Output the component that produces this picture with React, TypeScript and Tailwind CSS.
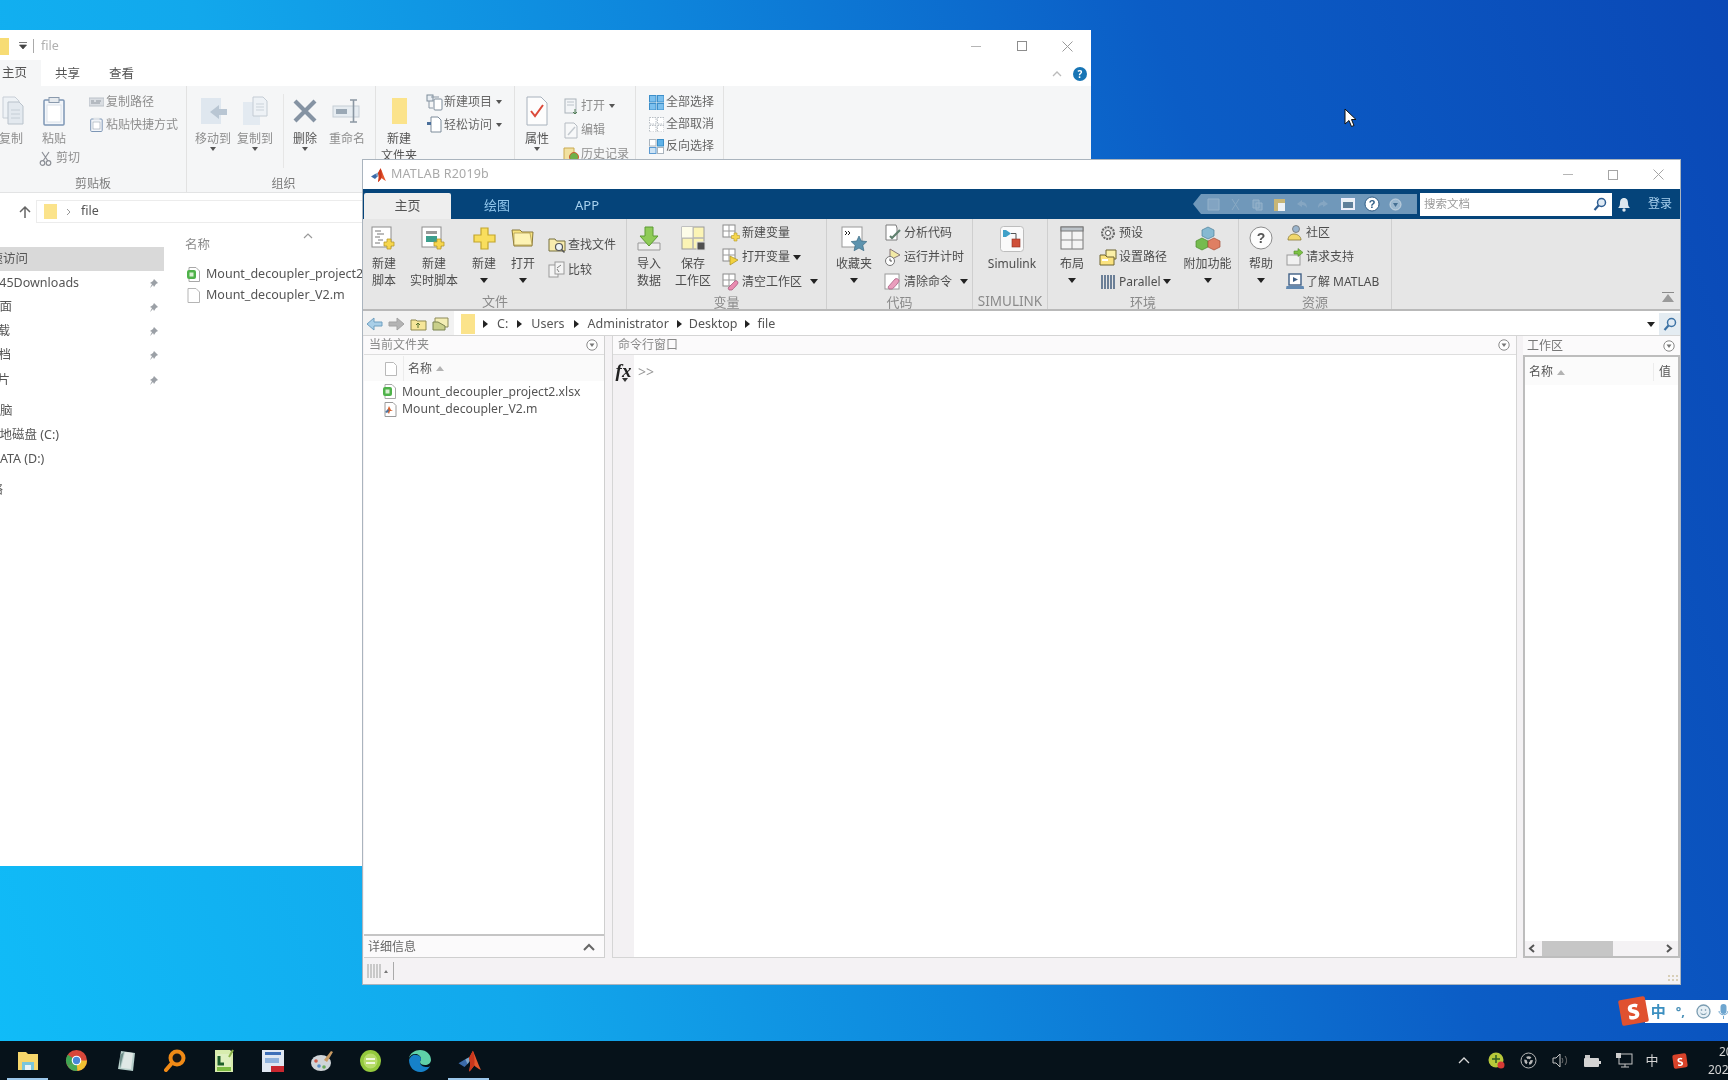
import React from "react";

type P = { children?: React.ReactNode; className?: string };
const S = ({ w = 16, h = 16, vb, children, className }: { w?: number; h?: number; vb?: string } & P) => (
  <svg width={w} height={h} viewBox={vb || `0 0 ${w} ${h}`} className={`shrink-0 ${className || ""}`}>{children}</svg>
);

/* ---------- shared little shapes ---------- */
const Tri = ({ c = "#222" }: { c?: string }) => (
  <S w={8} h={5}><path d="M0 0h8L4 5z" fill={c} /></S>
);
const Arrow = () => (
  <div className="flex h-[17px] items-center justify-center"><Tri /></div>
);
const DropCircle = () => (
  <S w={12} h={12}>
    <circle cx="6" cy="6" r="5.2" fill="#fff" stroke="#8a8a8a" />
    <path d="M3.5 4.5h5L6 8z" fill="#777" />
  </S>
);
const FolderY = ({ w = 14, h = 18 }: { w?: number; h?: number }) => (
  <div className={"shrink-0 bg-[#fbe38b]"} style={{ width: w, height: h }} />
);
const Matlab = ({ s = 16 }: { s?: number }) => (
  <S w={s} h={s} vb="0 0 16 16">
    <path d="M1 9.5 5.5 6.8 8 9l-3 3z" fill="#3b6aa8" />
    <path d="M5.5 6.8 8 5.5 8.5 8 7 10z" fill="#7fa6c9" />
    <path d="M8 6l2.6-4.8C12 4 14 10 16 14c-2-1-3.4-2-4.5-3-1.400 2-2.500 3.500-3.500 4 1-4 1-6 0-9z" fill="#e4572e" />
    <path d="M10.600 1.200c1 3 1.400 6 .9 9.800-1.400 2-2.500 3.500-3.500 4 1-4 1-6 0-9z" fill="#c9361c" />
  </S>
);

/* ---------- MATLAB toolstrip icons ---------- */
const Page = ({ c = "#fff" }: { c?: string }) => (
  <rect x="1" y="1" width="19" height="20" fill={c} stroke="#8d8d8d" />
);
const Plus = ({ x = 13, y = 13 }: { x?: number; y?: number }) => (
  <path
    d={`M${x + 3} ${y}h4v3h3v4h-3v3h-4v-3h-3v-4h3z`}
    fill="#f6d64e"
    stroke="#b99a2a"
    strokeWidth=".8"
  />
);
const IcNewScript = () => (
  <S w={26} h={25}>
    <Page />
    <path d="M4 5h6M6 8h7M4 11h5M7 14h5M4 17h5" stroke="#777" strokeWidth="1" />
    <Plus />
  </S>
);
const IcLive = () => (
  <S w={26} h={25}>
    <Page />
    <rect x="5" y="5" width="11" height="3" fill="#9a9a9a" />
    <rect x="5" y="10" width="11" height="6" fill="#3d9f8e" />
    <Plus />
  </S>
);
const IcPlusBig = () => (
  <S w={25} h={25}>
    <path d="M9 2h7v7h7v7h-7v7H9v-7H2V9h7z" fill="#f9de5d" stroke="#c2a52d" strokeWidth="1.200" />
  </S>
);
const IcOpenFolder = () => (
  <S w={24} h={22}>
    <path d="M1 4h8l2 2h11l-1 14H3z" fill="#f7e37e" stroke="#8b7a3a" />
    <path d="M3 7h16l2 12H3z" fill="#fdf3b4" stroke="#a8944a" strokeWidth=".7" />
  </S>
);
const IcFind = () => (
  <S w={19} h={18}>
    <path d="M1 3h6l1.500 2H17v10H1z" fill="#f8ecae" stroke="#77703f" />
    <circle cx="11" cy="11" r="3.500" fill="#eef4f7" stroke="#555" strokeWidth="1.200" />
    <path d="M13.500 13.500l3 3" stroke="#555" strokeWidth="1.500" />
  </S>
);
const IcCompare = () => (
  <S w={18} h={18}>
    <rect x="1" y="4" width="9" height="12" fill="#f4f4f4" stroke="#9a9a9a" />
    <rect x="7" y="1" width="9" height="12" fill="#f4f4f4" stroke="#9a9a9a" />
    <path d="M9 7l4-3M9 8l2 3" stroke="#7d7d7d" />
  </S>
);
const IcImport = () => (
  <S w={24} h={27}>
    <path d="M1 17h22v7H1z" fill="#eee" stroke="#999" />
    <path d="M8 1h8v9h5l-9 10-9-10h5z" fill="#8fcb58" stroke="#5c9a34" />
  </S>
);
const IcSaveWs = () => (
  <S w={25} h={25}>
    <rect x="1" y="1" width="22" height="22" fill="#fbf4b5" stroke="#9a9a9a" />
    <path d="M12 1v22M1 12h22" stroke="#aaa" />
    <rect x="1" y="1" width="11" height="11" fill="#fdfce8" />
    <rect x="16" y="16" width="8" height="8" fill="#4f4f4f" stroke="#ddd" />
    <path d="M12 1v22M1 12h22" stroke="#b8b8b8" />
  </S>
);
const Grid = ({ c = "#fff" }: { c?: string }) => (
  <>
    <rect x="1" y="1" width="12" height="12" fill={c} stroke="#8a8a8a" />
    <path d="M7 1v12M1 7h12" stroke="#9a9a9a" />
  </>
);
const IcNewVar = () => (
  <S w={18} h={18}><Grid /><path d="M12 9h3v2.500h2.500v3H15V17h-3v-2.500H9.500v-3H12z" fill="#f6d64e" stroke="#b59a2a" strokeWidth=".6" /></S>
);
const IcOpenVar = () => (
  <S w={18} h={18}><Grid /><path d="M8 8l8 4-8 5z" fill="#f3d23f" stroke="#a88f20" strokeWidth=".7" /></S>
);
const IcClearVar = () => (
  <S w={18} h={18}><Grid /><path d="M6 15l7-7c1-1 3 0 3 2 0 1-5 6-6 7H7z" fill="#e98bb0" stroke="#a05377" strokeWidth=".7" /></S>
);
const IcFav = () => (
  <S w={26} h={27}>
    <rect x="1" y="1" width="20" height="20" fill="#fff" stroke="#999" />
    <path d="M4 5l2 2-2 2M7 5l2 2-2 2" fill="none" stroke="#222" />
    <path d="M18 10l2.300 5 5.500.6-4 3.700 1.100 5.400-4.900-2.700-4.900 2.700 1.100-5.400-4-3.700 5.500-.6z" fill="#5d93ae" stroke="#3b6a82" strokeWidth=".7" />
  </S>
);
const IcAnalyze = () => (
  <S w={18} h={18}>
    <path d="M2 1h10l1 3v12H2z" fill="#fff" stroke="#7d7d7d" />
    <path d="M6 12l2 2 8-8" fill="none" stroke="#5f7f6d" strokeWidth="2.200" />
  </S>
);
const IcRunTime = () => (
  <S w={18} h={19}>
    <path d="M6 1l10 6-10 5z" fill="#f2e9a5" stroke="#877" />
    <circle cx="6" cy="13" r="4.500" fill="#fff" stroke="#777" />
    <path d="M6 10.500V13h2" fill="none" stroke="#555" />
  </S>
);
const IcClearCmd = () => (
  <S w={18} h={18}>
    <rect x="1" y="1" width="14" height="15" fill="#fff" stroke="#9a9a9a" />
    <path d="M4 14l7-8c1.500-1 4 0 4 2 0 1-6 8-7 8H5z" fill="#ea9ebd" stroke="#a75d80" strokeWidth=".8" />
  </S>
);
const IcSimulink = () => (
  <S w={24} h={26}>
    <rect x=".5" y=".5" width="23" height="25" rx="3" fill="#fafafa" stroke="#bdbdbd" />
    <path d="M3 4h3l5 3.500L6 11H3z" fill="#3fa0c8" />
    <path d="M11 7.500h5V13" fill="none" stroke="#555" />
    <rect x="12" y="13" width="8" height="8" fill="#cf4f38" stroke="#8d2e1e" strokeWidth=".6" />
  </S>
);
const IcLayout = () => (
  <S w={24} h={24}>
    <rect x="1" y="1" width="22" height="22" fill="#f4f4f4" stroke="#777" />
    <rect x="1" y="1" width="22" height="4" fill="#bcc3c9" stroke="#777" />
    <path d="M12 5v18M1 14h22" stroke="#8a8a8a" />
  </S>
);
const IcGear = () => (
  <S w={16} h={16}>
    <circle cx="8" cy="8" r="6" fill="#ddd" stroke="#666" strokeWidth="2" strokeDasharray="2 1" />
    <circle cx="8" cy="8" r="2.500" fill="#fff" stroke="#555" />
  </S>
);
const IcSetPath = () => (
  <S w={18} h={17}>
    <path d="M7 1h10v9H7z" fill="#fbf0a6" stroke="#6f6430" />
    <path d="M1 6h5l2 2h7v8H1z" fill="#fbe37f" stroke="#6f6430" />
    <rect x="3" y="10" width="6" height="2" fill="#fff" />
  </S>
);
const IcParallel = () => (
  <S w={16} h={16}>
    {[1, 4, 7, 10, 13].map((x) => <rect key={x} x={x} y="1" width="2" height="14" fill="#6b7f97" />)}
  </S>
);
const IcAddOn = () => (
  <S w={26} h={26}>
    <path d="M13 1l6 3v6l-6 3-6-3V4z" fill="#86b9d2" stroke="#4c7f99" strokeWidth=".7" />
    <path d="M7 12l6 3v6l-6 3-6-3v-6z" fill="#75bb4e" stroke="#4b8a2e" strokeWidth=".7" />
    <path d="M19 12l6 3v6l-6 3-6-3v-6z" fill="#df7f63" stroke="#a54f37" strokeWidth=".7" />
  </S>
);
const IcHelp = () => (
  <S w={24} h={24}>
    <circle cx="12" cy="12" r="11" fill="#fdfdfd" stroke="#8c8c8c" />
    <text x="12" y="17" textAnchor="middle" fontSize="14" fontWeight="700" fill="#555" fontFamily="Liberation Sans">?</text>
  </S>
);
const IcCommunity = () => (
  <S w={18} h={18}>
    <circle cx="10" cy="5" r="3.500" fill="#9ab4cc" stroke="#666" strokeWidth=".7" />
    <path d="M2 16c0-4 3-6 6-6s7 2 7 6z" fill="#f1d86d" stroke="#8a7a35" strokeWidth=".8" />
  </S>
);
const IcSupport = () => (
  <S w={18} h={18}>
    <rect x="1" y="7" width="13" height="10" fill="#f1f1f1" stroke="#999" />
    <path d="M8 3h4V0.500l5 4-5 4V6H8z" fill="#7cc244" stroke="#4f8a2a" strokeWidth=".6" />
  </S>
);
const IcLearn = () => (
  <S w={18} h={17}>
    <rect x="3" y="1" width="12" height="11" fill="#fff" stroke="#3f5f85" strokeWidth="1.400" />
    <path d="M7 4l5 2.500L7 9z" fill="#3f5f85" />
    <path d="M0.500 13h17l1 3H0z" fill="#6289b1" />
  </S>
);
const Mag = ({ c = "#2d5d92" }: { c?: string }) => (
  <S w={14} h={14}>
    <circle cx="8.500" cy="5.500" r="4" fill="#dfeaf4" stroke={c} strokeWidth="1.500" />
    <path d="M5.500 8.500L1.500 13" stroke={c} strokeWidth="2.200" />
  </S>
);
const Bell = () => (
  <S w={12} h={15}>
    <path d="M6 1c3 0 4 2.500 4 5 0 3 1 4 2 5H0c1-1 2-2 2-5 0-2.500 1-5 4-5z" fill="#dce6ee" />
    <circle cx="6" cy="13" r="1.700" fill="#dce6ee" />
  </S>
);

/* ---------- MATLAB components ---------- */
const Big = ({
  className, icon, lines, arrow,
}: { className: string; icon: React.ReactNode; lines: string[]; arrow?: boolean }) => (
  <div className={`flex shrink-0 flex-col items-center pt-[7px] ${className}`}>
    <div className="flex h-[29px] items-start justify-center">{icon}</div>
    {lines.map((l) => (
      <div key={l} className="whitespace-nowrap leading-[17px]">{l}</div>
    ))}
    {arrow && <Arrow />}
  </div>
);
const Small = ({ icon, text, tri, triGap }: { icon: React.ReactNode; text: string; tri?: boolean; triGap?: string }) => (
  <div className="flex h-[24.500px] items-center whitespace-nowrap">
    <div className="flex w-[20px] shrink-0 items-center justify-center">{icon}</div>
    <span className="ml-[1px]">{text}</span>
    {tri && <span className={`flex items-center ${triGap || "ml-[3px]"}`}><Tri /></span>}
  </div>
);
const Col = ({ className, children }: P) => (
  <div className={`flex shrink-0 flex-col pt-[2px] ${className || ""}`}>{children}</div>
);
const Group = ({ className, label, children }: { label: string } & P) => (
  <div className={`flex h-full shrink-0 flex-col border-r border-[#cfcfcf] ${className}`}>
    <div className="flex h-[75px]">{children}</div>
    <div className="text-center text-[13px] leading-[16px] text-[#8a8a8a]">{label}</div>
  </div>
);

const CrumbTri = () => (
  <S w={5} h={8}><path d="M0 0l5 4-5 4z" fill="#222" /></S>
);

const Xlsx = () => (
  <S w={13} h={15}>
    <path d="M2 .5h7l3.500 3.500v10.500H2z" fill="#fff" stroke="#a8a8a8" />
    <rect x="0" y="3" width="9" height="9" rx="2" fill="#4fb24a" />
    <rect x="2.500" y="5.500" width="4" height="4" fill="#d9f0d2" />
  </S>
);
const MFile = () => (
  <S w={14} h={15}>
    <path d="M2 .5h8l3 3v11H2z" fill="#fff" stroke="#9a9a9a" />
    <path d="M4 9l2-5 2 4 2 1-3 0-1 3z" fill="#d9632f" />
    <path d="M2 10l3-3 1 2-2 2z" fill="#49739f" />
  </S>
);

const MatlabWin = () => (
  <div className="absolute left-[362px] top-[159px] flex h-[826px] w-[1319px] flex-col border border-[#aab4be] bg-[#f4f2f4] text-[12px] text-[#4d4d4d]">
    {/* title */}
    <div className="flex h-[29px] shrink-0 items-center bg-white pl-[7px]">
      <Matlab />
      <span className="ml-[5px] text-[12.500px] tracking-[0.2px] text-[#a9a9a9]">MATLAB R2019b</span>
      <div className="ml-auto flex items-center">
        <div className="mr-[35px] h-px w-[10px] bg-[#b5b5b5]" />
        <div className="mr-[35px] h-[10px] w-[10px] border border-[#a5a5a5]" />
        <S w={11} h={11} className="mr-[16px]"><path d="M.5.5l10 10M10.500.5l-10 10" stroke="#a5a5a5" /></S>
      </div>
    </div>
    {/* blue tab strip */}
    <div className="flex h-[30px] shrink-0 items-end bg-[#05447a] pl-[1px]">
      <div className="flex h-[26px] w-[87px] items-center justify-center rounded-t-[2px] bg-[#eeeeee] text-[13px] text-[#555]">主页</div>
      <div className="flex h-[26px] w-[92px] items-center justify-center text-[13px] text-[#8fc4ea]">绘图</div>
      <div className="flex h-[26px] w-[88px] items-center justify-center text-[13px] text-[#a9d2ef]">APP</div>
      <div className="ml-auto flex h-full items-center">
        <div className="flex h-[20px] w-[224px] items-center gap-[9px] bg-[#7098ba] pl-[14px] [clip-path:polygon(8px_0,100%_0,100%_100%,8px_100%,0_50%)]">
          <S w={13} h={13}><path d="M1 1h11v11H1z" fill="#82a4c2" stroke="#94b2ca" /></S>
          <S w={13} h={13}><path d="M3 12l7-11M10 12L3 1" stroke="#8aaac4" /></S>
          <S w={13} h={13}><path d="M2 2h6v8H2zM5 5h6v7H5z" fill="#7ea2c0" stroke="#96b3cb" /></S>
          <S w={13} h={15}><rect x="1" y="2" width="11" height="12" fill="#c7b676" /><rect x="5" y="6" width="7" height="8" fill="#eef2f5" /></S>
          <S w={13} h={13}><path d="M2 6l5-4v2c3 0 5 2 5 6-1-2-3-3-5-3v2z" fill="#85a6c2" /></S>
          <S w={13} h={13}><path d="M11 6L6 2v2C3 4 1 6 1 10c1-2 3-3 5-3v2z" fill="#85a6c2" /></S>
          <S w={14} h={12} className="ml-[2px]"><rect x=".5" y=".5" width="13" height="11" fill="#eaf0f4" stroke="#eef" /><rect x="2" y="4" width="10" height="6" fill="#5f7f9a" /></S>
          <S w={16} h={16}><circle cx="8" cy="8" r="7" fill="#fff" stroke="#2f5d85" /><text x="8" y="12" textAnchor="middle" fontSize="11" fontWeight="700" fill="#2f5d85" fontFamily="Liberation Sans">?</text></S>
          <S w={13} h={13}><circle cx="6.500" cy="6.500" r="5.500" fill="#9bb8cf" stroke="#c5d4e0" /><path d="M4 5h5L6.500 9z" fill="#456f92" /></S>
        </div>
        <div className="ml-[3px] flex h-[23px] w-[192px] items-center bg-white pl-[4px] pr-[5px] text-[11.500px] text-[#9a9a9a]">
          搜索文档
          <span className="ml-auto"><Mag /></span>
        </div>
        <div className="ml-[5px] flex w-[14px] justify-center"><Bell /></div>
        <div className="ml-[17px] mr-[8px] text-[12px] text-[#a8d0ee]">登录</div>
      </div>
    </div>
    {/* toolstrip */}
    <div className="flex h-[92px] shrink-0 border-b-2 border-[#b9b9b9] bg-[#e6e6e6]">
      <Group label="文件" className="w-[264px] pl-px">
        <Big className="w-[40px]" icon={<IcNewScript />} lines={["新建", "脚本"]} />
        <Big className="w-[60px]" icon={<IcLive />} lines={["新建", "实时脚本"]} />
        <Big className="w-[40px]" icon={<IcPlusBig />} lines={["新建"]} arrow />
        <Big className="w-[38px]" icon={<IcOpenFolder />} lines={["打开"]} arrow />
        <Col className="ml-[5px] pt-[14px]">
          <Small icon={<IcFind />} text="查找文件" />
          <Small icon={<IcCompare />} text="比较" />
        </Col>
      </Group>
      <Group label="变量" className="w-[200px]">
        <Big className="w-[44px]" icon={<IcImport />} lines={["导入", "数据"]} />
        <Big className="w-[44px]" icon={<IcSaveWs />} lines={["保存", "工作区"]} />
        <Col className="ml-[6px]">
          <Small icon={<IcNewVar />} text="新建变量" />
          <Small icon={<IcOpenVar />} text="打开变量" tri />
          <Small icon={<IcClearVar />} text="清空工作区" tri triGap="ml-[8px]" />
        </Col>
      </Group>
      <Group label="代码" className="w-[146px]">
        <Big className="w-[54px]" icon={<IcFav />} lines={["收藏夹"]} arrow />
        <Col className="ml-[2px]">
          <Small icon={<IcAnalyze />} text="分析代码" />
          <Small icon={<IcRunTime />} text="运行并计时" />
          <Small icon={<IcClearCmd />} text="清除命令" tri triGap="ml-[8px]" />
        </Col>
      </Group>
      <Group label="SIMULINK" className="w-[75px] [&>div:last-child]:text-[13.500px]">
        <Big className="ml-[3px] w-[72px] text-[12px]" icon={<IcSimulink />} lines={["Simulink"]} />
      </Group>
      <Group label="环境" className="w-[191px]">
        <Big className="w-[48px]" icon={<IcLayout />} lines={["布局"]} arrow />
        <Col className="ml-[2px]">
          <Small icon={<IcGear />} text="预设" />
          <Small icon={<IcSetPath />} text="设置路径" />
          <Small icon={<IcParallel />} text="Parallel" tri triGap="ml-[2px]" />
        </Col>
        <Big className="ml-[9px] w-[56px]" icon={<IcAddOn />} lines={["附加功能"]} arrow />
      </Group>
      <Group label="资源" className="w-[153px]">
        <Big className="ml-[1px] w-[42px]" icon={<IcHelp />} lines={["帮助"]} arrow />
        <Col className="ml-[3px]">
          <Small icon={<IcCommunity />} text="社区" />
          <Small icon={<IcSupport />} text="请求支持" />
          <Small icon={<IcLearn />} text="了解 MATLAB" />
        </Col>
      </Group>
      <div className="flex flex-1 items-end justify-end pb-[6px] pr-[6px]">
        <S w={12} h={11}><path d="M0 .5h12" stroke="#8a8a8a" /><path d="M6 2l6 8H0z" fill="#9a9a9a" /></S>
      </div>
    </div>
    {/* address */}
    <div className="flex h-[25px] shrink-0 items-center border-b border-[#d5d5d5] bg-white text-[12.500px] text-[#555]">
      <div className="flex h-full w-[91px] shrink-0 items-center gap-[5px] bg-[#f2f2f2] pl-[3px] pt-[2px]">
        <S w={17} h={14}><path d="M8 1v4h8v4H8v4L1 7z" fill="#a9cfe8" stroke="#6f9fc0" /></S>
        <S w={17} h={14}><path d="M9 1v4H1v4h8v4l7-6z" fill="#b4b4b4" stroke="#a2a2a2" /></S>
        <S w={17} h={14}><path d="M1 3h5l1 1h9v9H1z" fill="#f6e69a" stroke="#8f8950" /><path d="M8 11V6m-2 2l2-2 2 2" fill="none" stroke="#55702f" /></S>
        <S w={17} h={14}><path d="M3 1h13v9H3z" fill="#f4eeb5" stroke="#8c8a5a" /><path d="M1 5h5l7 4v4H1z" fill="#c9cf8a" stroke="#7b8350" /></S>
      </div>
      <div className="flex flex-1 items-center pt-[2px]">
        <div className="ml-[7px]"><FolderY w={14} h={20} /></div>
        <div className="ml-[8px] flex items-center"><CrumbTri /></div>
        <span className="ml-[9px]">C:</span>
        <div className="ml-[9px]"><CrumbTri /></div>
        <span className="ml-[9px]">Users</span>
        <div className="ml-[9px]"><CrumbTri /></div>
        <span className="ml-[9px]">Administrator</span>
        <div className="ml-[8px]"><CrumbTri /></div>
        <span className="ml-[7px]">Desktop</span>
        <div className="ml-[8px]"><CrumbTri /></div>
        <span className="ml-[7px]">file</span>
        <div className="ml-auto flex items-center">
          <Tri />
          <div className="ml-[4px] flex h-[22px] w-[21px] items-center justify-center bg-[#e4ecf2]"><Mag c="#3d73a5" /></div>
        </div>
      </div>
    </div>
    {/* panels */}
    <div className="flex min-h-0 flex-1 pl-px pt-0">
      <div className="flex w-[241px] shrink-0 flex-col border-b border-r border-[#cfcfcf] bg-white">
        <div className="flex h-[19px] shrink-0 items-center justify-between border-b border-[#dedede] bg-[#fbfafb] pl-[5px] pr-[6px] text-[#8a8a8a]">
          <span>当前文件夹</span><DropCircle />
        </div>
        <div className="flex h-[26px] shrink-0 items-center bg-[#fafafa] pl-[21px] pt-[1px]">
          <S w={12} h={14}><path d="M.5.500h8l3 3v10H.5z" fill="#fff" stroke="#b9b9b9" /></S>
          <div className="ml-[6px] flex h-full items-center border-l border-[#ececec] pl-[4px]">
            <span className="text-[#555]">名称</span>
            <S w={8} h={5} className="ml-[4px]"><path d="M4 0l4 5H0z" fill="#b3b3b3" /></S>
          </div>
        </div>
        <div className="flex-1 pl-[19px] pt-[2px] text-[12.200px] text-[#555]">
          <div className="flex h-[17.500px] items-center gap-[6px] whitespace-nowrap"><Xlsx />Mount_decoupler_project2.xlsx</div>
          <div className="flex h-[17.500px] items-center gap-[5px] whitespace-nowrap"><MFile />Mount_decoupler_V2.m</div>
        </div>
        <div className="flex h-[23px] shrink-0 items-center justify-between border-t-2 border-[#c5c5c5] bg-[#fbfafb] pl-[4px] pr-[9px] text-[#666]">
          <span>详细信息</span>
          <S w={12} h={8}><path d="M1 7l5-5 5 5" fill="none" stroke="#666" strokeWidth="2" /></S>
        </div>
      </div>
      <div className="ml-[7px] flex w-[905px] shrink-0 flex-col border-b border-r border-l border-[#d5d5d5] bg-white">
        <div className="flex h-[19px] shrink-0 items-center justify-between border-b border-[#dedede] bg-[#fbfafb] pl-[5px] pr-[6px] text-[#8a8a8a]">
          <span>命令行窗口</span><DropCircle />
        </div>
        <div className="flex flex-1">
          <div className="flex h-full w-[21px] justify-center bg-[#f3f1f3] pt-[6px]">
            <div className="flex flex-col items-center">
              <span className="text-[19px] font-bold italic leading-[20px] text-[#222] [font-family:'Liberation_Serif',serif]">fx</span>
              <div className="-mt-[3px] ml-[4px]"><S w={6} h={4}><path d="M0 0h6L3 4z" fill="#333" /></S></div>
            </div>
          </div>
          <div className="pl-[4px] pt-[6px] text-[14px] text-[#9a9a9a]">&gt;&gt;</div>
        </div>
      </div>
      <div className="ml-[6px] flex w-[157px] shrink-0 flex-col">
        <div className="flex h-[19px] shrink-0 items-center justify-between bg-[#fbfafb] pl-[4px] pr-[5px] text-[#777]">
          <span>工作区</span><DropCircle />
        </div>
        <div className="flex flex-1 flex-col border-2 border-[#bdbdbd] bg-white">
          <div className="flex h-[28px] shrink-0 items-center bg-[#fbfbfb] pl-[4px] pr-[7px] pt-[2px] text-[#555]">
            <span>名称</span>
            <S w={8} h={5} className="ml-[4px]"><path d="M4 0l4 5H0z" fill="#b3b3b3" /></S>
            <span className="ml-auto border-l border-[#ececec] pl-[5px]">值</span>
          </div>
          <div className="flex-1" />
          <div className="flex h-[15px] shrink-0 items-center bg-[#f4f2f4] pl-[3px] pr-[5px]">
            <S w={8} h={9}><path d="M6 1L2 4.500 6 8" fill="none" stroke="#555" strokeWidth="2" /></S>
            <div className="ml-[6px] h-full w-[71px] bg-[#c6c6c6]" />
            <S w={8} h={9} className="ml-auto"><path d="M2 1l4 3.500L2 8" fill="none" stroke="#555" strokeWidth="2" /></S>
          </div>
        </div>
      </div>
    </div>
    {/* status */}
    <div className="flex h-[26px] shrink-0 items-center bg-[#f4f2f4] pl-[4px]">
      <S w={16} h={14}>{[0, 3, 6, 9, 12].map((x) => <rect key={x} x={x} y="0" width="2" height="14" fill="#c9c9c9" />)}</S>
      <S w={4} h={3} className="ml-px"><path d="M2 0l2 3H0z" fill="#777" /></S>
      <div className="ml-[5px] h-[18px] w-px bg-[#aaa]" />
      <div className="ml-auto mr-[2px] mt-[14px] grid grid-cols-3 gap-[2px]">
        {[0, 1, 2, 3, 4, 5].map((i) => <div key={i} className="h-[2px] w-[2px] bg-[#d8cfb8]" />)}
      </div>
    </div>
  </div>
);

/* ---------- Explorer ---------- */
const Lbl = ({ className, children }: P) => (
  <div className={`whitespace-nowrap text-center ${className || ""}`}>{children}</div>
);
const EBig = ({
  className, icon, lines, arrow,
}: { className: string; icon: React.ReactNode; lines: string[]; arrow?: boolean }) => (
  <div className={`flex shrink-0 flex-col items-center pt-[10px] ${className}`}>
    <div className="mb-[3px] flex h-[30px] items-center justify-center">{icon}</div>
    {lines.map((l) => <Lbl key={l} className="mt-[2px] leading-[15px]">{l}</Lbl>)}
    {arrow && <div className="flex justify-center pt-[1px]"><S w={6} h={4}><path d="M0 0h6L3 4z" fill="#555" /></S></div>}
  </div>
);
const ESmall = ({ icon, text, tri, h = "h-[22.500px]" }: { icon: React.ReactNode; text: string; tri?: boolean; h?: string }) => (
  <div className={`flex ${h} items-center whitespace-nowrap`}>
    <div className="flex w-[20px] shrink-0 items-center justify-center">{icon}</div>
    <span>{text}</span>
    {tri && <span className="ml-[4px] text-[#555]"><S w={6} h={4}><path d="M0 0h6L3 4z" fill="#555" /></S></span>}
  </div>
);
const EGroup = ({ className, label, children }: { label: string } & P) => (
  <div className={`flex h-full shrink-0 flex-col border-r border-[#e2e2e2] ${className}`}>
    <div className="flex h-[90px]">{children}</div>
    <Lbl className="text-[12px] leading-[16px] text-[#7c7c7c]">{label}</Lbl>
  </div>
);
const IcECopy = () => (
  <S w={28} h={30}>
    <path d="M6 1h12l4 4v17H6z" fill="#eef2f6" stroke="#c7ced6" />
    <path d="M11 6h11l4 4v18H11z" fill="#e3e9ef" stroke="#b9c2cb" />
    <path d="M14 14h9M14 18h9M14 22h9" stroke="#c5ced6" />
  </S>
);
const IcEPaste = () => (
  <S w={22} h={30}>
    <rect x="1" y="4" width="20" height="25" rx="1" fill="#f3f6fa" stroke="#7d96b5" strokeWidth="1.500" />
    <rect x="6" y="1.500" width="10" height="5" fill="#e6eaee" stroke="#8a9aad" />
    <rect x="4" y="9" width="14" height="17" fill="#fff" stroke="#dbe2ea" />
  </S>
);
const IcScissors = () => (
  <S w={13} h={15}>
    <path d="M3 1l6 9M10 1L4 10" stroke="#8b8f96" strokeWidth="1.200" />
    <circle cx="3.500" cy="12" r="2.300" fill="none" stroke="#8b8f96" strokeWidth="1.200" />
    <circle cx="9.500" cy="12" r="2.300" fill="none" stroke="#8b8f96" strokeWidth="1.200" />
  </S>
);
const IcEMove = () => (
  <S w={28} h={30}>
    <rect x="2" y="2" width="20" height="26" fill="#dfe7ef" />
    <path d="M28 13v6h-8v4l-9-7 9-7v4z" fill="#b9c6d3" />
  </S>
);
const IcECopyTo = () => (
  <S w={28} h={30}>
    <rect x="2" y="6" width="17" height="23" fill="#e3eaf1" />
    <path d="M12 1h10l4 4v15H12z" fill="#eef2f6" stroke="#c4ccd4" />
    <path d="M15 8h8M15 11h8M15 14h8" stroke="#cbd3da" />
  </S>
);
const IcEDel = () => (
  <S w={26} h={26}>
    <path d="M3 3l20 20M23 3L3 23" stroke="#8593a3" strokeWidth="4.200" />
  </S>
);
const IcERename = () => (
  <S w={30} h={28}>
    <rect x="1" y="9" width="26" height="11" fill="#e6ecf1" stroke="#c6ced6" />
    <rect x="4" y="12" width="11" height="5" fill="#9aa8b5" />
    <path d="M18 3h7M21.500 3v22M18 25h7" stroke="#8b97a3" strokeWidth="1.600" fill="none" />
  </S>
);
const IcEPath = () => (
  <S w={15} h={10}><rect x="0" y="1" width="15" height="8" fill="#d9dde2" stroke="#bcc2c9" /><path d="M2 4h3M7 4h5M2 6h9" stroke="#8f969e" /></S>
);
const IcEShort = () => (
  <S w={13} h={15}>
    <rect x=".7" y="2" width="11.500" height="12.500" rx="1" fill="#f3f6fa" stroke="#7d96b5" />
    <rect x="3" y="5" width="7" height="7" fill="#fff" stroke="#9aa5b1" strokeWidth=".6" />
    <rect x="3.500" y=".7" width="6" height="2.500" fill="#dfe3e8" />
  </S>
);
const IcENewItem = () => (
  <S w={17} h={17}>
    <rect x="1" y="1" width="6" height="6" fill="#e9eef3" stroke="#7d8b9a" />
    <path d="M5 3h8M3 7v7h4" fill="none" stroke="#8a97a4" />
    <rect x="8" y="5" width="8" height="11" rx="1" fill="#fff" stroke="#7d8b9a" />
  </S>
);
const IcEEasy = () => (
  <S w={17} h={17}>
    <path d="M5 1h7l3 3v12H5z" fill="#fff" stroke="#7d8b9a" />
    <path d="M1 6h4v3H1z" fill="#4a6f9b" />
  </S>
);
const IcEProp = () => (
  <S w={22} h={30}>
    <path d="M1 1h14l6 6v22H1z" fill="#fdfdfd" stroke="#a8b2bd" />
    <path d="M5 15l4 5 8-11" fill="none" stroke="#dc4a3a" strokeWidth="2" />
  </S>
);
const IcEOpen = () => (
  <S w={15} h={17}>
    <rect x="1" y="1" width="11" height="14" fill="#f3f5f7" stroke="#aab2ba" />
    <path d="M3 4h7M3 7h7" stroke="#bcc3ca" />
    <path d="M11 11v5M9 14l2 2 2-2" stroke="#4f7d53" fill="none" />
  </S>
);
const IcEEdit = () => (
  <S w={15} h={17}>
    <path d="M1 1h9l3 3v12H1z" fill="#f7f8f9" stroke="#b5bbc2" />
    <path d="M4 13l7-8" stroke="#c3c9cf" strokeWidth="1.500" />
  </S>
);
const IcEHist = () => (
  <S w={17} h={16}>
    <path d="M1 2h10v13H1z" fill="#f2e1a0" stroke="#c9aa50" />
    <circle cx="11" cy="11" r="4.500" fill="#6fb04a" stroke="#cf5b30" />
  </S>
);
const Sq4 = ({ fill, stroke, dash }: { fill: string; stroke: string; dash?: boolean }) => (
  <S w={15} h={15}>
    {[[0, 0], [8, 0], [0, 8], [8, 8]].map(([x, y]) => (
      <rect key={`${x}${y}`} x={x + 0.5} y={y + 0.5} width="6.500" height="6.500" fill={fill} stroke={stroke} strokeDasharray={dash ? "1.500 1" : undefined} />
    ))}
  </S>
);
const IcEInvert = () => (
  <S w={15} h={15}>
    <rect x=".5" y="8.500" width="6.500" height="6" fill="#cde3f5" stroke="#5b9ad2" />
    <rect x="8.500" y=".5" width="6" height="6.500" fill="#5fb2e8" stroke="#3b8fc9" />
    <rect x=".5" y=".5" width="6.500" height="6.500" fill="#fff" stroke="#aab4bd" />
    <rect x="8.500" y="8.500" width="6" height="6" fill="#fff" stroke="#aab4bd" />
  </S>
);
const Pin = () => (
  <S w={11} h={11}><path d="M6 1l4 4-2 1-2 3-1-2-3 3 2-4-2-1 3-2z" fill="#9ba0a6" /></S>
);
const NavRow = ({ text, ml, pin, className }: { text: string; ml: string; pin?: boolean; className?: string }) => (
  <div className={`flex h-[24.200px] items-center whitespace-nowrap pr-[5px] ${className || ""}`}>
    <span className={ml}>{text}</span>
    {pin && <span className="ml-auto"><Pin /></span>}
  </div>
);

const Explorer = () => (
  <div className="absolute left-0 top-[30px] flex h-[836px] w-[1091px] flex-col overflow-hidden bg-white text-[12px] text-[#8e8e8e]">
    {/* title */}
    <div className="flex h-[32px] shrink-0 items-center">
      <div className="h-[17px] w-[9px] bg-[#f7dc74]" />
      <S w={8} h={8} className="ml-[10px]"><path d="M0 .5h8M.5 3h7L4 7z" fill="#444" stroke="#444" strokeWidth=".7" /></S>
      <div className="ml-[6px] h-[14px] w-px bg-[#aaa]" />
      <span className="ml-[7px] text-[12.500px] text-[#b0b0b0]">file</span>
      <div className="ml-auto flex items-center">
        <div className="mr-[36px] h-px w-[10px] bg-[#b5b5b5]" />
        <div className="mr-[35px] h-[10px] w-[10px] border border-[#8d8d8d]" />
        <S w={11} h={11} className="mr-[18px]"><path d="M.5.5l10 10M10.500.5l-10 10" stroke="#9a9a9a" /></S>
      </div>
    </div>
    {/* tabs */}
    <div className="flex h-[24px] shrink-0 items-center text-[12.500px] text-[#555]">
      <div className="flex h-[26px] w-[41px] items-center justify-center self-end bg-[#f5f6f7] pr-[12px]">主页</div>
      <div className="flex w-[53px] justify-center">共享</div>
      <div className="flex w-[55px] justify-center">查看</div>
      <div className="ml-auto flex items-center">
        <S w={10} h={6} className="mr-[11px]"><path d="M1 5l4-4 4 4" fill="none" stroke="#bbb" strokeWidth="1.300" /></S>
        <div className="mr-[4px] flex h-[14px] w-[14px] items-center justify-center rounded-full bg-[#1875b5] text-[10px] font-bold leading-none text-white">?</div>
      </div>
    </div>
    {/* ribbon */}
    <div className="flex h-[107px] shrink-0 border-b border-[#e2e3e4] bg-[#f5f6f7]">
      <EGroup label="剪贴板" className="w-[187px]">
        <EBig className="-ml-[14px] w-[50px]" icon={<IcECopy />} lines={["复制"]} />
        <div className="w-[36px] shrink-0">
          <EBig className="w-[36px]" icon={<IcEPaste />} lines={["粘贴"]} />
          <div className="mt-[3px] flex items-center whitespace-nowrap pl-[3px]"><IcScissors /><span className="ml-[4px]">剪切</span></div>
        </div>
        <div className="ml-[14px] flex shrink-0 flex-col pt-[5px]">
          <ESmall icon={<IcEPath />} text="复制路径" />
          <ESmall icon={<IcEShort />} text="粘贴快捷方式" />
        </div>
      </EGroup>
      <EGroup label="组织" className="w-[189px] pl-[5px]">
        <EBig className="w-[42px]" icon={<IcEMove />} lines={["移动到"]} arrow />
        <EBig className="w-[42px]" icon={<IcECopyTo />} lines={["复制到"]} arrow />
        <div className="my-[8px] ml-[7px] w-px bg-[#e6e6e6]" />
        <EBig className="w-[42px] text-[#555]" icon={<IcEDel />} lines={["删除"]} arrow />
        <EBig className="w-[42px]" icon={<IcERename />} lines={["重命名"]} />
      </EGroup>
      <EGroup label="新建" className="w-[139px] pl-[2px]">
        <EBig className="w-[42px] text-[#555]" icon={<FolderY w={15} h={26} />} lines={["新建", "文件夹"]} />
        <div className="ml-[4px] flex shrink-0 flex-col pt-[5px] text-[#666]">
          <ESmall icon={<IcENewItem />} text="新建项目" tri />
          <ESmall icon={<IcEEasy />} text="轻松访问" tri />
        </div>
      </EGroup>
      <EGroup label="打开" className="w-[121px] pl-[3px]">
        <EBig className="w-[38px] text-[#555]" icon={<IcEProp />} lines={["属性"]} arrow />
        <div className="ml-[5px] flex shrink-0 flex-col pt-[8px]">
          <ESmall icon={<IcEOpen />} text="打开" tri h="h-[24px]" />
          <ESmall icon={<IcEEdit />} text="编辑" h="h-[24px]" />
          <ESmall icon={<IcEHist />} text="历史记录" h="h-[24px]" />
        </div>
      </EGroup>
      <EGroup label="选择" className="w-[88px] pl-[10px]">
        <div className="flex shrink-0 flex-col pt-[5px] text-[#666]">
          <ESmall icon={<Sq4 fill="#7cc0ee" stroke="#3d8fca" />} text="全部选择" h="h-[22px]" />
          <ESmall icon={<Sq4 fill="#fff" stroke="#b9bec4" dash />} text="全部取消" h="h-[22px]" />
          <ESmall icon={<IcEInvert />} text="反向选择" h="h-[22px]" />
        </div>
      </EGroup>
    </div>
    {/* nav */}
    <div className="flex h-[37px] shrink-0 items-center text-[#555]">
      <S w={14} h={14} className="ml-[18px]"><path d="M7 13V2M2 7l5-5 5 5" fill="none" stroke="#666" strokeWidth="1.500" /></S>
      <div className="ml-[4px] flex h-[23px] flex-1 items-center border border-[#ececec] pl-[7px]">
        <FolderY w={13} h={15} />
        <S w={5} h={8} className="ml-[9px]"><path d="M1 1l3 3-3 3" fill="none" stroke="#999" /></S>
        <span className="ml-[10px] text-[12.500px]">file</span>
      </div>
    </div>
    {/* body */}
    <div className="flex min-h-0 flex-1 overflow-hidden">
      <div className="w-[164px] shrink-0 overflow-hidden pt-[17px] text-[12.500px] text-[#555]">
        <NavRow text="快速访问" ml="-ml-[22px]" className="bg-[#d9d9d9]" />
        <NavRow text="2345Downloads" ml="-ml-[15px]" pin />
        <NavRow text="桌面" ml="-ml-[13px]" pin />
        <NavRow text="下载" ml="-ml-[15px]" pin />
        <NavRow text="文档" ml="-ml-[14px]" pin />
        <NavRow text="图片" ml="-ml-[15px]" pin />
        <NavRow text="此电脑" ml="-ml-[25px]" className="mt-[7px]" />
        <NavRow text="本地磁盘 (C:)" ml="-ml-[13px]" />
        <NavRow text="DATA (D:)" ml="-ml-[9px]" />
        <NavRow text="网络" ml="-ml-[22px]" className="mt-[7px]" />
      </div>
      <div className="relative flex-1 pl-[21px] pt-[6px] text-[#555]">
        <div className="flex h-[18px] w-[145px] justify-center pl-[0px]">
          <S w={10} h={6} className="ml-[100px] mt-[-3px]"><path d="M1 5l4-4 4 4" fill="none" stroke="#9a9a9a" strokeWidth="1.200" /></S>
        </div>
        <div className="-mt-[18px] text-[12.500px] text-[#8c8c8c]">名称</div>
        <div className="mt-[9.500px] flex h-[21px] items-center gap-[6px] whitespace-nowrap pl-[2px] text-[12.500px]"><Xlsx />Mount_decoupler_project2.xlsx</div>
        <div className="flex h-[21px] items-center gap-[6px] whitespace-nowrap pl-[2px] text-[12.500px]">
          <S w={13} h={15}><path d="M1 .5h8l3.500 3.500v10.500H1z" fill="#fff" stroke="#b5b5b5" /></S>
          Mount_decoupler_V2.m
        </div>
      </div>
    </div>
  </div>
);

/* ---------- taskbar ---------- */
const TB = ({ children, active }: { active?: boolean } & P) => (
  <div className="relative flex h-full w-[49px] shrink-0 items-center justify-center">
    {children}
    {active && <div className="absolute bottom-0 left-[4px] right-[4px] h-[2px] bg-[#9bc7ea]" />}
  </div>
);
const TaskBar = () => (
  <div className="relative flex h-[39px] shrink-0 items-center bg-[#06121a] pl-[3px] text-[13px] text-[#d5d5d5]">
    <TB active>
      <S w={22} h={20}>
        <path d="M1 1h8l2 2h10v16H1z" fill="#f5d66b" />
        <rect x="5" y="11" width="12" height="8" fill="#79c6dc" />
        <rect x="8" y="14" width="6" height="5" fill="#e9f3f6" />
      </S>
    </TB>
    <TB>
      <S w={23} h={23} vb="0 0 24 24">
        <circle cx="12" cy="12" r="11" fill="#d8473a" />
        <path d="M12 12L2.500 17.500A11 11 0 0 1 3 6z" fill="#3ea552" />
        <path d="M12 12L2.500 17.500A11 11 0 0 0 13 23z" fill="#4aa957" />
        <path d="M12 12h11A11 11 0 0 1 13 23z" fill="#f1c232" />
        <circle cx="12" cy="12" r="5" fill="#fff" />
        <circle cx="12" cy="12" r="3.800" fill="#4a88d8" />
      </S>
    </TB>
    <TB>
      <S w={22} h={24}>
        <path d="M6 2l14 2-2 18-15-2z" fill="#b7cfcb" />
        <path d="M10 3l8 1-2 16-10-1z" fill="#dfe8e6" />
        <path d="M5 6l4-3-4 16z" fill="#6f8e8a" />
      </S>
    </TB>
    <TB>
      <S w={22} h={23}>
        <circle cx="13" cy="9" r="6.500" fill="#171717" stroke="#f08a16" strokeWidth="4" />
        <path d="M8 14l-6 7" stroke="#f08a16" strokeWidth="4" strokeLinecap="round" />
      </S>
    </TB>
    <TB>
      <S w={20} h={24}>
        <path d="M1 1h15l3 3v19H1z" fill="#d8ecae" />
        <rect x="3" y="5" width="14" height="16" fill="#dff0c0" />
        <path d="M5 7v8h5" stroke="#1c5e2a" strokeWidth="3" fill="none" />
        <rect x="3" y="18" width="14" height="4" fill="#7dbb43" />
        <path d="M15 8l4-7" stroke="#8ab34b" strokeWidth="2" />
      </S>
    </TB>
    <TB>
      <S w={22} h={24}>
        <rect x="0" y="1" width="22" height="22" fill="#dfe7f2" />
        <rect x="3" y="3" width="16" height="3" fill="#3e6fb8" />
        <rect x="3" y="9" width="14" height="5" fill="#8fb2dd" />
        <rect x="9" y="17" width="13" height="6" fill="#c9272f" />
      </S>
    </TB>
    <TB>
      <S w={24} h={24}>
        <ellipse cx="11" cy="14" rx="10" ry="8" fill="#cfd4d8" />
        <circle cx="6" cy="12" r="1.800" fill="#d05c4a" />
        <circle cx="9" cy="17" r="1.800" fill="#5a8ec9" />
        <circle cx="14" cy="18" r="1.800" fill="#6aaa5c" />
        <path d="M14 11l7-9 2 1-6 10z" fill="#c89a62" />
      </S>
    </TB>
    <TB>
      <S w={23} h={24}>
        <ellipse cx="11.500" cy="12" rx="10.500" ry="11" fill="#94c93d" />
        <ellipse cx="11.500" cy="12" rx="7" ry="7.500" fill="#b8dc6b" />
        <path d="M7 10h9M7 14h9" stroke="#eef7d8" strokeWidth="2" />
      </S>
    </TB>
    <TB>
      <S w={24} h={24}>
        <path d="M12 1c6.500 0 11 4.500 11 10 0 3-3 5-6 5-3 0-5-1-5-3 0-1 1-2 1-3 0-3-3-5-6-5-3 0-5 2-6 4 1-5 6-8 11-8z" fill="#5fd0a8" />
        <path d="M1 11c1-3 4-6 7-5 3 0 5 2 5 4 0 1-1 2-1 3 0 4 4 5 7 5 1 0 2 0 3-1-2 4-6 6-10 6C6 23 1 18 1 11z" fill="#1681c9" />
      </S>
    </TB>
    <TB active><Matlab s={24} /></TB>
    <div className="flex-1" />
    <div className="flex h-full w-[32px] items-center justify-center"><S w={12} h={7}><path d="M1 6l5-5 5 5" fill="none" stroke="#d8d8d8" strokeWidth="1.300" /></S></div>
    <div className="flex h-full w-[32px] items-center justify-center">
      <S w={17} h={17}><circle cx="8" cy="8" r="7.500" fill="#b7c83a" /><path d="M4 7h8M8 3v8" stroke="#2e5a22" strokeWidth="1.500" /><circle cx="13" cy="13" r="3.500" fill="#d43a35" /></S>
    </div>
    <div className="flex h-full w-[32px] items-center justify-center">
      <S w={17} h={17}><circle cx="8.500" cy="8.500" r="7.500" fill="none" stroke="#b9b9b9" /><circle cx="8.500" cy="8.500" r="3" fill="none" stroke="#b9b9b9" strokeWidth="2.500" strokeDasharray="4 2" /></S>
    </div>
    <div className="flex h-full w-[32px] items-center justify-center">
      <S w={17} h={15}><path d="M1 5h3l4-4v13L4 10H1z" fill="none" stroke="#c4c4c4" /><path d="M10 5c1 1.500 1 3.500 0 5M13 3c2 2.500 2 6.500 0 9" fill="none" stroke="#777" /></S>
    </div>
    <div className="flex h-full w-[32px] items-center justify-center">
      <S w={17} h={12}><rect x="0" y="3" width="15" height="9" rx="1" fill="#d4d4d4" /><rect x="15" y="6" width="2" height="3" fill="#d4d4d4" /><rect x="1" y="0" width="5" height="3" fill="#c8c8c8" /></S>
    </div>
    <div className="flex h-full w-[32px] items-center justify-center">
      <S w={17} h={15}><rect x="3" y="1" width="13" height="10" fill="none" stroke="#c4c4c4" /><path d="M9 11v3M5 14h8" stroke="#c4c4c4" /><rect x="0" y="0" width="5" height="5" fill="#cfcfcf" /></S>
    </div>
    <div className="flex h-full w-[24px] items-center justify-center text-[13px]">中</div>
    <div className="flex h-full w-[32px] items-center justify-center">
      <div className="flex h-[14px] w-[14px] -rotate-[8deg] items-center justify-center rounded-[2px] bg-[#d9432a] text-[11px] font-bold leading-none text-white">S</div>
    </div>
    <div className="ml-[12px] flex w-[20px] shrink-0 flex-col overflow-visible whitespace-nowrap text-[12px] leading-[18px]">
      <span className="pl-[11px]">20:36</span>
      <span>2021/3/12</span>
    </div>
  </div>
);

export default function App() {
  return (
    <div className="relative flex h-[1080px] w-[1728px] flex-col overflow-hidden bg-[linear-gradient(72deg,#10bcf8_0%,#12a8ec_26%,#0e86dc_48%,#0b5dc6_72%,#0a48b6_100%)] blur-[0.5px] [font-family:'Noto_Sans','Noto_Sans_CJK_SC',sans-serif]">
      <Explorer />
      <MatlabWin />
      {/* Sogou IME bar */}
      <div className="absolute left-[1620px] top-[998px] flex h-[26px] w-[108px] items-center">
        <div className="z-10 flex h-[26px] w-[27px] -rotate-[10deg] items-center justify-center rounded-[2px] bg-[#e0512f] text-[21px] font-black leading-none text-white">S</div>
        <div className="-ml-[2px] flex h-[23px] flex-1 items-center bg-white pl-[6px] text-[#3b8fc0]">
          <span className="text-[15px] font-bold">中</span>
          <span className="ml-[10px] text-[13px] font-bold leading-none text-[#4a90b8]">°,</span>
          <S w={15} h={15} className="ml-[11px]"><circle cx="7.500" cy="7.500" r="6.500" fill="#e7f0f5" stroke="#7b9db2" strokeWidth="1.300" /><path d="M4.500 9c1 2 5 2 6 0" fill="none" stroke="#6a8da2" /><circle cx="5.500" cy="6" r=".8" fill="#6a8da2" /><circle cx="9.500" cy="6" r=".8" fill="#6a8da2" /></S>
          <S w={10} h={15} className="ml-[7px]"><rect x="2.500" y="0" width="6" height="10" rx="3" fill="#6da5cf" /><path d="M1 7c0 5 9 5 9 0M5.500 12v3" fill="none" stroke="#6da5cf" /></S>
        </div>
      </div>
      {/* mouse cursor */}
      <div className="absolute left-[1344px] top-[108px]">
        <S w={13} h={20}><path d="M1 1v15l4-3.500 2.500 6 2.500-1-2.500-6H12z" fill="#fff" stroke="#111" strokeWidth="1" /></S>
      </div>
      <div className="flex-1" />
      <TaskBar />
    </div>
  );
}
